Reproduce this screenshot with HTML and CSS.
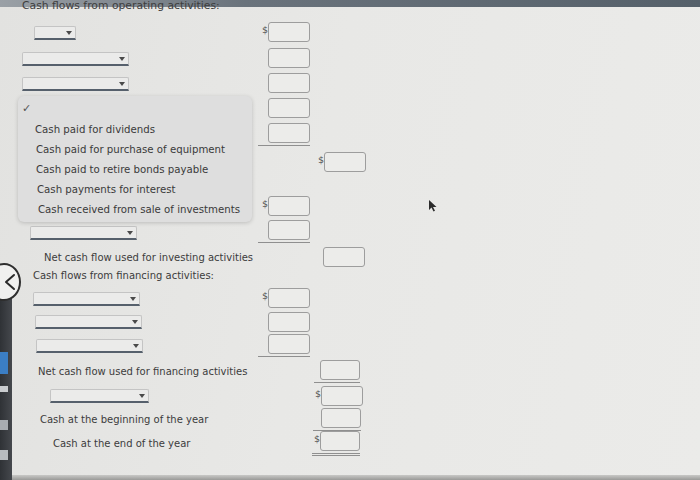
FILE: index.html
```html
<!DOCTYPE html>
<html>
<head>
<meta charset="utf-8">
<link rel="stylesheet" href="styles.css">
</head>
<body>
<div class="page">
  <div class="topband"></div>
  <div class="heading">Cash flows from operating activities:</div>

  <div class="row r2">
    <div class="lab p34"><span class="sel sel-s"></span></div>
    <div class="ca"><span class="cur">$</span><span class="box"></span></div>
    <div class="cb"></div>
  </div>
  <div class="row r3">
    <div class="lab p22"><span class="sel"></span></div>
    <div class="ca"><span class="cur"></span><span class="box"></span></div>
    <div class="cb"></div>
  </div>
  <div class="row r4">
    <div class="lab p22"><span class="sel"></span></div>
    <div class="ca"><span class="cur"></span><span class="box"></span></div>
    <div class="cb"></div>
  </div>
  <div class="row r5">
    <div class="lab p24"><span class="sel"></span></div>
    <div class="ca"><span class="cur"></span><span class="box"></span></div>
    <div class="cb"></div>
  </div>
  <div class="row r6">
    <div class="lab p24"><span class="sel"></span></div>
    <div class="ca tot"><span class="cur"></span><span class="box"></span></div>
    <div class="cb"></div>
  </div>
  <div class="row r7">
    <div class="lab p26"><span class="sel"></span></div>
    <div class="ca"></div>
    <div class="cb"><span class="cur">$</span><span class="box"></span></div>
  </div>
  <div class="row r8">
    <div class="lab p28"><span class="sel"></span></div>
    <div class="ca"><span class="cur">$</span><span class="box"></span></div>
    <div class="cb"></div>
  </div>
  <div class="row r9">
    <div class="lab p30"><span class="sel"></span></div>
    <div class="ca tot"><span class="cur"></span><span class="box"></span></div>
    <div class="cb"></div>
  </div>
  <div class="row r10">
    <div class="lab p44 txt">Net cash flow used for investing activities</div>
    <div class="ca"></div>
    <div class="cb b2"><span class="cur"></span><span class="box"></span></div>
  </div>
  <div class="row r11">
    <div class="lab p33 txt">Cash flows from financing activities:</div>
  </div>
  <div class="row r12">
    <div class="lab p33"><span class="sel"></span></div>
    <div class="ca"><span class="cur">$</span><span class="box"></span></div>
    <div class="cb"></div>
  </div>
  <div class="row r13">
    <div class="lab p35"><span class="sel"></span></div>
    <div class="ca"><span class="cur"></span><span class="box"></span></div>
    <div class="cb"></div>
  </div>
  <div class="row r14">
    <div class="lab p36"><span class="sel"></span></div>
    <div class="ca tot"><span class="cur"></span><span class="box"></span></div>
    <div class="cb"></div>
  </div>
  <div class="row r15">
    <div class="lab p38 txt">Net cash flow used for financing activities</div>
    <div class="ca"></div>
    <div class="cb b3 tot"><span class="cur"></span><span class="box"></span></div>
  </div>
  <div class="row r16">
    <div class="lab p50"><span class="sel sel-m"></span></div>
    <div class="ca"></div>
    <div class="cb b4"><span class="cur">$</span><span class="box"></span></div>
  </div>
  <div class="row r17">
    <div class="lab p40 txt">Cash at the beginning of the year</div>
    <div class="ca"></div>
    <div class="cb b4 tot"><span class="cur"></span><span class="box"></span></div>
  </div>
  <div class="row r18">
    <div class="lab p53 txt">Cash at the end of the year</div>
    <div class="ca"></div>
    <div class="cb b5 tot dbl"><span class="cur">$</span><span class="box"></span></div>
  </div>

  <div class="popup">
    <div class="check">&#10003;</div>
    <ul class="opts">
      <li>Cash paid for dividends</li>
      <li>Cash paid for purchase of equipment</li>
      <li>Cash paid to retire bonds payable</li>
      <li>Cash payments for interest</li>
      <li>Cash received from sale of investments</li>
    </ul>
  </div>

  <div class="leftstrip">
    <span class="blk blue"></span>
    <span class="blk g1"></span>
    <span class="blk g2"></span>
    <span class="blk g3"></span>
  </div>
  <div class="backbtn">
    <svg width="14" height="18" viewBox="0 0 14 18"><path d="M11 2 L3 9 L11 16" fill="none" stroke="#2a2a2a" stroke-width="2" stroke-linecap="round" stroke-linejoin="round"/></svg>
  </div>
  <div class="pointer">
    <svg width="10" height="12" viewBox="0 0 10 12"><path d="M1 0 L1 10 L3.5 7.5 L5.5 11.5 L7 10.8 L5 7 L8.5 7 Z" fill="#2b2b2b"/></svg>
  </div>
  <div class="bottomband"></div>
</div>
</body>
</html>
```

FILE: styles.css
```css
html, body {
  margin: 0;
  padding: 0;
}
body {
  width: 700px;
  height: 480px;
  overflow: hidden;
  background: #e6e6e4;
  font-family: "DejaVu Sans", Verdana, sans-serif;
  color: #3a3a3a;
}
.page {
  position: relative;
  width: 700px;
  height: 480px;
  overflow: hidden;
  background: linear-gradient(100deg, #e2e2e0 0%, #e8e8e6 45%, #ebebe9 100%);
}
.topband {
  position: absolute;
  left: 0;
  top: 0;
  width: 700px;
  height: 7px;
  background: linear-gradient(90deg, #9aa0a6 0%, #6a737c 35%, #55606a 100%);
  z-index: 1;
}
.heading {
  position: relative;
  z-index: 2;
  height: 14px;
  margin: 0;
  padding: 0 0 0 22px;
  font-size: 10.8px;
  line-height: 12px;
  color: #3e3e3e;
}
.row {
  display: grid;
  grid-template-columns: 258px 58px 70px;
  align-items: start;
}
.lab {
  height: 100%;
  display: flex;
  align-items: center;
  font-size: 10px;
  white-space: nowrap;
}
.txt { color: #3c3c3c; }
.p22 { padding-left: 22px; }
.p24 { padding-left: 24px; }
.p26 { padding-left: 26px; }
.p28 { padding-left: 28px; }
.p30 { padding-left: 30px; }
.p33 { padding-left: 33px; }
.p34 { padding-left: 34px; }
.p35 { padding-left: 35px; }
.p36 { padding-left: 36px; }
.p38 { padding-left: 38px; }
.p40 { padding-left: 40px; }
.p44 { padding-left: 44px; }
.p50 { padding-left: 50px; }
.p53 { padding-left: 53px; }

.ca { display: flex; align-items: center; padding-left: 4px; }
.cb { display: flex; align-items: center; padding-left: 2px; }
.cb.b2 { padding-left: 1px; }
.cb.b3 { padding-left: 0; margin-left: -2px; }
.cb.b4 { margin-left: -3px; }
.cb.b5 { margin-left: -4px; }

.cur {
  width: 6px;
  font-size: 9.5px;
  color: #505050;
  line-height: 10px;
  align-self: flex-start;
  margin-top: 3px;
}
.box {
  display: block;
  width: 40px;
  height: 18px;
  border: 1.5px solid #9d9d9d;
  border-radius: 3px;
  background: #ececea;
}
.tot {
  padding-bottom: 2px;
  border-bottom: 1.5px solid #8f8f8f;
  width: 48px;
}
.cb.tot { width: 46px; }
.dbl { border-bottom: 3px double #8f8f8f; }

.sel {
  position: relative;
  display: block;
  width: 105px;
  height: 11px;
  border: 1px solid #c4c4c4;
  border-bottom: 2px solid #56606c;
  border-radius: 2px 2px 0 0;
  background: #ebebea;
}
.sel::after {
  content: "";
  position: absolute;
  right: 3px;
  top: 4px;
  border-left: 3px solid transparent;
  border-right: 3px solid transparent;
  border-top: 4px solid #4a4a4a;
}
.sel-s { width: 40px; }
.sel-m { width: 97px; }

.r2 { margin-top: 8px; height: 21px; }
.r3 { margin-top: 5px; height: 21px; }
.r4 { margin-top: 4px; height: 22px; }
.r5 { margin-top: 3px; height: 21px; }
.r6 { margin-top: 4px; height: 21px; }
.r7 { margin-top: 8px; height: 21px; }
.r8 { margin-top: 23px; height: 21px; }
.r9 { margin-top: 3px; height: 21px; }
.r9 .sel { margin-top: 2px; }
.r10 { margin-top: 6px; height: 21px; }
.r10 .lab { padding-bottom: 2px; }
.r11 { height: 14px; }
.r12 { margin-top: 6px; height: 21px; }
.r13 { margin-top: 3px; height: 20px; }
.r14 { margin-top: 2px; height: 21px; }
.r15 { margin-top: 5px; height: 21px; }
.r16 { margin-top: 5px; height: 19px; }
.r17 { margin-top: 3px; height: 19px; }
.r18 { margin-top: 4px; height: 21px; }

.popup {
  position: absolute;
  left: 18px;
  top: 96px;
  width: 234px;
  height: 126px;
  background: #dedede;
  border-radius: 6px;
  box-shadow: 0 1px 4px rgba(0,0,0,0.18);
  z-index: 3;
}
.check {
  position: absolute;
  left: 4px;
  top: 6px;
  font-size: 11px;
  color: #555;
}
.opts {
  list-style: none;
  margin: 0;
  padding: 24px 0 0 0;
  font-size: 10.2px;
  color: #3a3a3a;
}
.opts li {
  height: 20px;
  line-height: 20px;
  white-space: nowrap;
}
.opts li:nth-child(1) { padding-left: 17px; }
.opts li:nth-child(2) { padding-left: 18px; }
.opts li:nth-child(3) { padding-left: 18px; }
.opts li:nth-child(4) { padding-left: 19px; }
.opts li:nth-child(5) { padding-left: 20px; }

.leftstrip {
  position: absolute;
  left: 0;
  top: 282px;
  width: 12px;
  height: 198px;
  background: linear-gradient(90deg, #2f3236, #45484d);
  z-index: 4;
}
.blk {
  position: absolute;
  left: 0;
  width: 8px;
}
.blue { top: 70px; height: 22px; background: #3b7ec4; }
.g1 { top: 104px; height: 6px; background: #c9cccf; }
.g2 { top: 138px; height: 10px; background: #a9adb2; }
.g3 { top: 168px; height: 10px; background: #b8bcc0; }
.backbtn {
  position: absolute;
  left: -13px;
  top: 263px;
  width: 28px;
  height: 34px;
  border: 2px solid #2e2e2e;
  border-radius: 50%;
  background: #f0f0ef;
  display: flex;
  align-items: center;
  justify-content: flex-end;
  padding-right: 2px;
  z-index: 5;
}
.pointer {
  position: absolute;
  left: 428px;
  top: 197px;
  z-index: 5;
}
.bottomband {
  position: absolute;
  left: 12px;
  bottom: 0;
  width: 688px;
  height: 5px;
  background: linear-gradient(180deg, #c8c8c6, #9a9a98);
  z-index: 4;
}
```
